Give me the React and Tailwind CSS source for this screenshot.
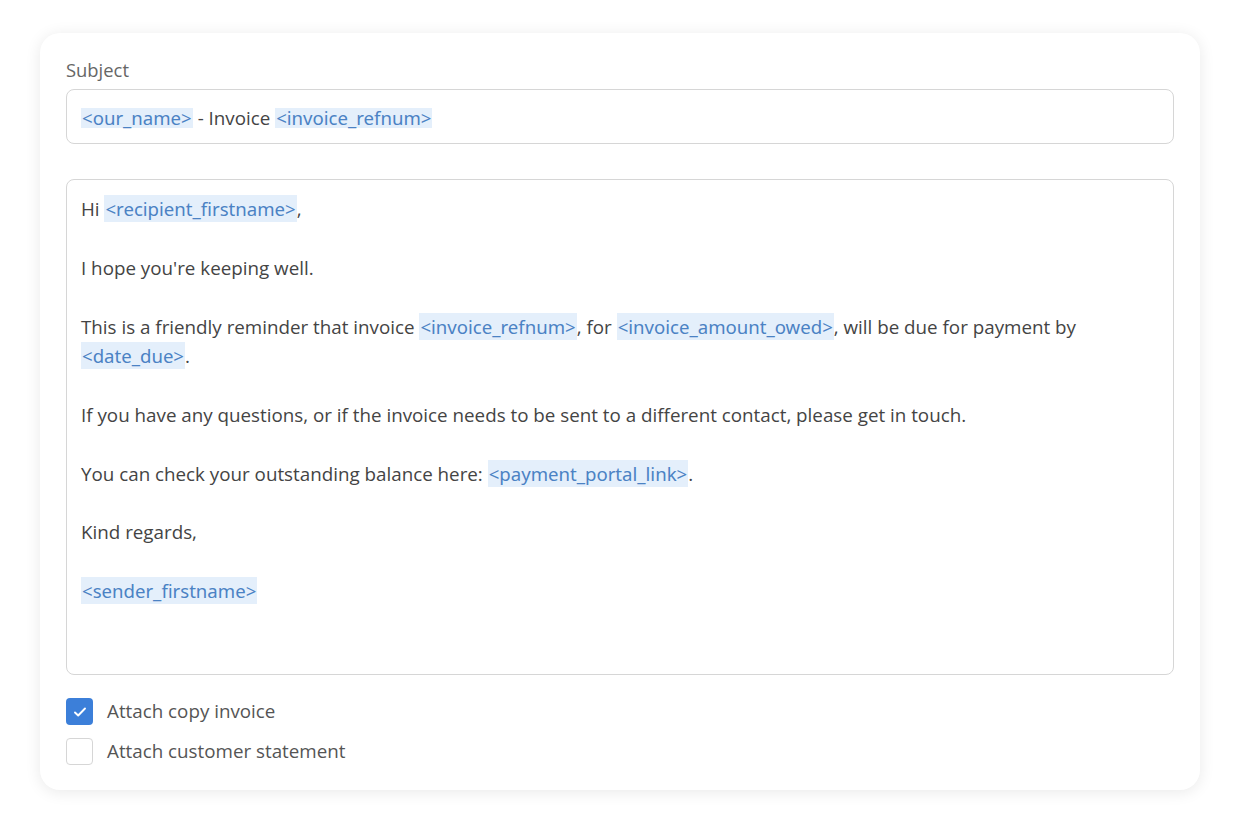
import React from "react";

function Tag({ children }) {
  return (
    <span className="bg-[#e4effb] text-[#4b82c4] px-[1px] py-[1px] leading-[1] font-['Noto_Sans',sans-serif] text-[18.6px]">{children}</span>
  );
}

export default function App() {
  return (
    <div className="min-h-screen bg-white pt-[33px] px-[40px] font-['Open_Sans',sans-serif]">
      <div className="w-[1160px] h-[757px] rounded-[20px] bg-white shadow-[0_2px_16px_rgba(0,0,0,0.09)] px-[26px] pt-[26px]">
        <div className="text-[18.4px] text-[#666] leading-[22px] mb-[8px]">Subject</div>
        <div className="h-[55px] border border-[#d6d6d6] rounded-[8px] flex items-center px-[14px] pt-[3px] text-[18.8px] text-[#444]">
          <Tag>&lt;our_name&gt;</Tag>
          <span className="whitespace-pre"> - Invoice </span>
          <Tag>&lt;invoice_refnum&gt;</Tag>
        </div>
        <div className="mt-[35px] h-[496px] border border-[#d6d6d6] rounded-[8px] px-[14px] pt-[15px] text-[18.8px] leading-[29.4px] text-[#444]">
          <p>Hi <Tag>&lt;recipient_firstname&gt;</Tag>,</p>
          <p className="mt-[29.4px]">I hope you're keeping well.</p>
          <p className="mt-[29.4px]">
            This is a friendly reminder that invoice <Tag>&lt;invoice_refnum&gt;</Tag>, for{" "}
            <Tag>&lt;invoice_amount_owed&gt;</Tag>, will be due for payment by
            <br />
            <Tag>&lt;date_due&gt;</Tag>.
          </p>
          <p className="mt-[29.4px]">
            If you have any questions, or if the invoice needs to be sent to a different contact, please get in touch.
          </p>
          <p className="mt-[29.4px]">
            You can check your outstanding balance here: <Tag>&lt;payment_portal_link&gt;</Tag>.
          </p>
          <p className="mt-[29.4px]">Kind regards,</p>
          <p className="mt-[29.4px]"><Tag>&lt;sender_firstname&gt;</Tag></p>
        </div>
        <div className="mt-[23px] flex flex-col gap-[13px]">
          <label className="h-[27px] flex items-center gap-[14px] text-[18.8px] text-[#555]">
            <span className="w-[27px] h-[27px] rounded-[4px] bg-[#3c7fd9] flex items-center justify-center">
              <svg width="16" height="16" viewBox="0 0 16 16" fill="none">
                <path d="M3 8.5l3.2 3L13 4.5" stroke="white" strokeWidth="1.9" strokeLinecap="round" strokeLinejoin="round" />
              </svg>
            </span>
            Attach copy invoice
          </label>
          <label className="h-[27px] flex items-center gap-[14px] text-[18.8px] text-[#555]">
            <span className="w-[27px] h-[27px] rounded-[4px] border border-[#d6d6d6] bg-white"></span>
            Attach customer statement
          </label>
        </div>
      </div>
    </div>
  );
}
